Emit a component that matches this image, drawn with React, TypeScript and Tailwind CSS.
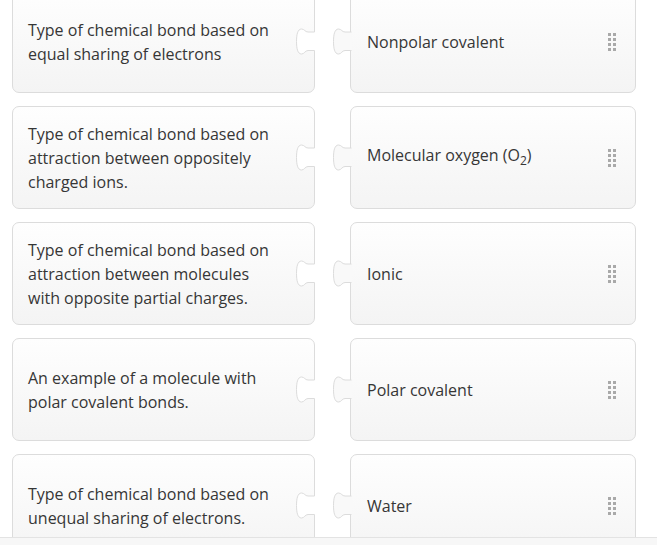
import React from 'react';

interface Pair {
  prompt: string;
  answer: React.ReactNode;
  hasSub?: boolean;
}

const pairs: Pair[] = [
  { prompt: 'Type of chemical bond based on equal sharing of electrons', answer: 'Nonpolar covalent' },
  {
    prompt: 'Type of chemical bond based on attraction between oppositely charged ions.',
    answer: (
      <>
        Molecular oxygen (O<span className="relative top-[4px] text-[12px] leading-[0]">2</span>)
      </>
    ),
    hasSub: true,
  },
  { prompt: 'Type of chemical bond based on attraction between molecules with opposite partial charges.', answer: 'Ionic' },
  { prompt: 'An example of a molecule with polar covalent bonds.', answer: 'Polar covalent' },
  { prompt: 'Type of chemical bond based on unequal sharing of electrons.', answer: 'Water' },
];

// cavity on the right edge of a prompt card
function Socket() {
  return (
    <svg
      className="absolute right-[-1px] top-1/2 -translate-y-1/2"
      width="20"
      height="28"
      viewBox="0 0 20 28"
    >
      <path d="M20 4 L13 4 C10 4 9.5 1 6.5 1 C2.5 1 1.5 7 1.5 13.5 C1.5 20 2.5 26 6.5 26 C9.5 26 10 22.5 13 22.5 L20 22.5 Z" fill="#ffffff" />
      <path
        d="M19.5 4 L13 4 C10 4 9.5 1 6.5 1 C2.5 1 1.5 7 1.5 13.5 C1.5 20 2.5 26 6.5 26 C9.5 26 10 22.5 13 22.5 L19.5 22.5"
        fill="none"
        stroke="#dcdcdc"
        strokeWidth="1"
      />
    </svg>
  );
}

// tab sticking out of the left edge of an answer card
function Tab() {
  return (
    <svg
      className="absolute left-[-20px] top-1/2 -translate-y-1/2"
      width="21"
      height="28"
      viewBox="0 0 21 28"
    >
      <path d="M21 4 L14 4 C11 4 10.5 1 7.5 1 C3.5 1 2.5 7 2.5 13.5 C2.5 20 3.5 26 7.5 26 C10.5 26 11 22.5 14 22.5 L21 22.5 Z" fill="#f9f9f9" />
      <path
        d="M20.5 4 L14 4 C11 4 10.5 1 7.5 1 C3.5 1 2.5 7 2.5 13.5 C2.5 20 3.5 26 7.5 26 C10.5 26 11 22.5 14 22.5 L20.5 22.5"
        fill="none"
        stroke="#dcdcdc"
        strokeWidth="1"
      />
    </svg>
  );
}

function Handle() {
  return (
    <div className="grid grid-cols-2 gap-x-[2px] gap-y-[2px] shrink-0">
      {Array.from({ length: 8 }).map((_, i) => (
        <span key={i} className="w-[3px] h-[3px] bg-[#a9a9a9]" />
      ))}
    </div>
  );
}

export default function App() {
  return (
    <div className="w-[657px] h-[545px] bg-white overflow-hidden flex flex-col" style={{ fontFamily: '"Open Sans", "Noto Sans", sans-serif' }}>
      <div className="h-[537px] overflow-hidden">
        <div className="flex flex-col gap-[13px] mt-[-10px]">
          {pairs.map((p, i) => (
            <div key={i} className="flex items-stretch pl-[12px] gap-[35px]">
              <div className="relative w-[303px] h-[103px] flex items-center pl-[15px] pr-[40px] border border-[#dcdcdc] rounded-[7px] bg-gradient-to-b from-[#fefefe] to-[#f4f4f4]">
                <p className="text-[16px] leading-[24px] text-[#363636]">{p.prompt}</p>
                <Socket />
              </div>
              <div className="relative w-[286px] h-[103px] flex items-center justify-between pl-[16px] pr-[19px] border border-[#dcdcdc] rounded-[7px] bg-gradient-to-b from-[#fefefe] to-[#f4f4f4]">
                <span className={p.hasSub ? 'text-[16px] leading-[24px] text-[#363636] pb-[5px]' : 'text-[16px] leading-[24px] text-[#363636]'}>
                  {p.answer}
                </span>
                <Handle />
                <Tab />
              </div>
            </div>
          ))}
        </div>
      </div>
      <div className="flex-1 border-t border-[#e3e3e3] bg-[#f7f7f7]" />
    </div>
  );
}
